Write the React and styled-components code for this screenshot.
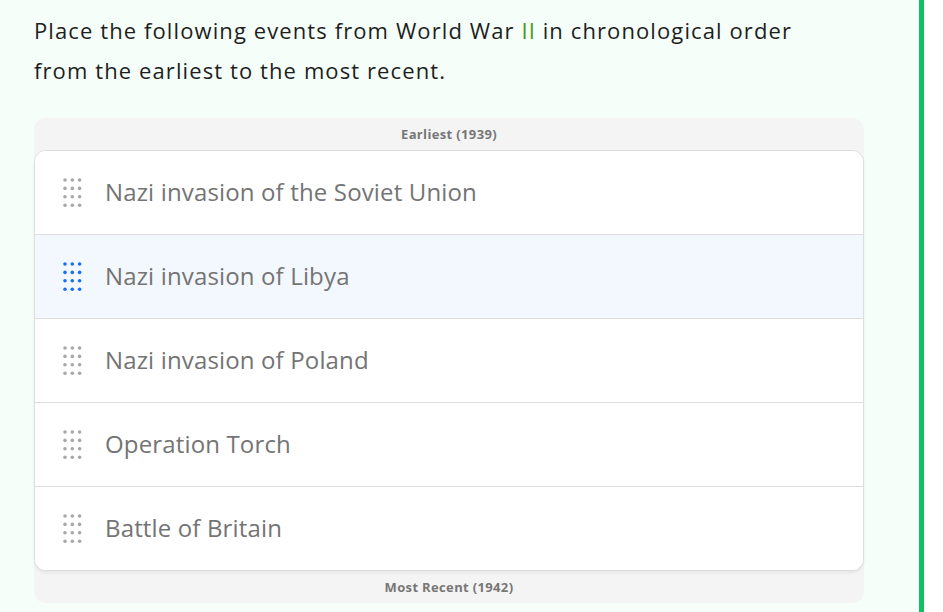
import React from 'react';
import styled, { createGlobalStyle } from 'styled-components';

const GlobalStyle = createGlobalStyle`
  html, body {
    margin: 0;
    padding: 0;
    background: #ffffff;
    font-family: "Open Sans", "Noto Sans", sans-serif;
  }
`;

const Page = styled.div`
  display: flex;
  height: 612px;
`;

const Main = styled.main`
  width: 924px;
  box-sizing: border-box;
  padding: 10px 0 0 34px;
  background: #f5fef9;
  border-right: solid 5px #12c064;
`;

const Prompt = styled.p`
  margin: 0;
  font-size: 22px;
  line-height: 40px;
  letter-spacing: 1.1px;
  color: #1e1e1e;
  width: 800px;
`;

const Numeral = styled.span`
  color: #4c9a16;
`;

const Board = styled.div`
  margin-top: 28px;
  width: 830px;
  background: #f4f4f4;
  border-radius: 12px;
`;

const Caption = styled.div`
  height: 32px;
  display: flex;
  align-items: center;
  justify-content: center;
  font-size: 13px;
  font-weight: 700;
  letter-spacing: 0.35px;
  color: #777777;
`;

const List = styled.ul`
  list-style: none;
  margin: 0;
  padding: 0;
  background: #ffffff;
  border: solid 1px #dddddd;
  border-radius: 12px;
  overflow: hidden;
  box-shadow: 0 2px 3px rgba(0, 0, 0, 0.06);
`;

const Item = styled.li`
  height: 83px;
  display: flex;
  align-items: center;
  gap: 23px;
  padding-left: 28px;
  background: ${(p) => (p.$active ? '#f3f7fe' : '#ffffff')};
  & + & {
    border-top: solid 1px #dddddd;
  }
`;

const Label = styled.span`
  font-size: 24px;
  letter-spacing: 0.15px;
  color: #747474;
  padding-bottom: 3px;
`;

function Grip({ active }) {
  const fill = active ? '#1a6ef5' : '#a8a8a8';
  const dots = [];
  for (let r = 0; r < 4; r++) {
    for (let c = 0; c < 3; c++) {
      dots.push(<circle key={`${r}-${c}`} cx={2 + c * 7.3} cy={2 + r * 8.4} r={1.8} fill={fill} />);
    }
  }
  return (
    <svg width="19" height="30" viewBox="0 0 19 30">
      {dots}
    </svg>
  );
}

const events = [
  'Nazi invasion of the Soviet Union',
  'Nazi invasion of Libya',
  'Nazi invasion of Poland',
  'Operation Torch',
  'Battle of Britain',
];

export default function App() {
  return (
    <Page>
      <GlobalStyle />
      <Main>
        <Prompt>
          Place the following events from World War <Numeral>II</Numeral> in chronological order from the
          earliest to the most recent.
        </Prompt>
        <Board>
          <Caption>Earliest (1939)</Caption>
          <List>
            {events.map((e, i) => (
              <Item key={e} $active={i === 1}>
                <Grip active={i === 1} />
                <Label>{e}</Label>
              </Item>
            ))}
          </List>
          <Caption>Most Recent (1942)</Caption>
        </Board>
      </Main>
    </Page>
  );
}
